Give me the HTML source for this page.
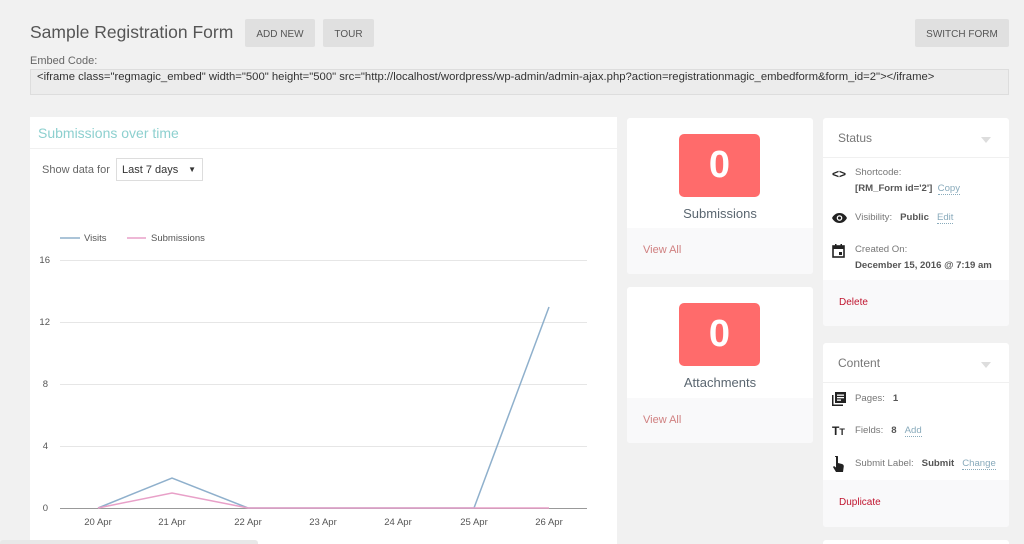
<!DOCTYPE html>
<html><head><style>
html,body{margin:0;width:1024px;height:544px;overflow:hidden}
body{background:#f1f1f1;font-family:"Liberation Sans",sans-serif;position:relative;color:#555}
.a{position:absolute}
.btn{position:absolute;background:#e0e0e0;border-radius:2px;font-size:10px;color:#555;text-align:center;line-height:28px;height:28px;top:19px}
.btn span{position:relative;top:2px}
.card{position:absolute;background:#fff;border-radius:3px;overflow:hidden}
.foot{position:absolute;left:0;right:0;bottom:0;background:#f9f9fa}
.red{position:absolute;left:52px;width:81px;height:63px;background:#ff6b6b;border-radius:5px;color:#fff;font-weight:bold;font-size:38px;text-align:center;line-height:63px}
.lbl{position:absolute;left:0;right:0;text-align:center;font-size:13px;color:#5a6670}
.va{position:absolute;left:16px;font-size:11px;color:#d08080}
.hd{position:absolute;left:0;right:0;top:0;border-bottom:1px solid #f0f0f0;font-size:12px;color:#777}
.hd span{position:absolute;left:15px}
.tri{position:absolute;right:18px;width:0;height:0;border-left:5px solid transparent;border-right:5px solid transparent;border-top:6px solid #ddd}
.row{position:absolute;left:32px;font-size:9.6px;color:#777;line-height:16px}
.row b{color:#555}
.lk{color:#8ab;border-bottom:1px dotted #8ab}
.ic{position:absolute;left:9px}
</style></head><body>
<div class="a" style="left:30px;top:22px;font-size:17.5px;color:#555">Sample Registration Form</div>
<div class="btn" style="left:245px;width:70px"><span>ADD NEW</span></div>
<div class="btn" style="left:323px;width:51px"><span>TOUR</span></div>
<div class="btn" style="left:915px;width:94px"><span>SWITCH FORM</span></div>
<div class="a" style="left:30px;top:55px;font-size:11px;color:#666">Embed Code:</div>
<div class="a" style="left:30px;top:69px;height:24px;background:#ececec;border:1px solid #ddd;font-size:11.3px;color:#333;line-height:15px;padding-left:6px;width:971px">&lt;iframe class="regmagic_embed" width="500" height="500" src="http://localhost/wordpress/wp-admin/admin-ajax.php?action=registrationmagic_embedform&amp;form_id=2"&gt;&lt;/iframe&gt;</div>

<div class="card" style="left:30px;top:117px;width:587px;height:440px;border-radius:0">
<div class="a" style="left:8px;top:8px;font-size:14px;color:#8dd0cf">Submissions over time</div>
<div class="a" style="left:0;right:0;top:31px;border-top:1px solid #f0f0f0"></div>
<div class="a" style="left:12px;top:47px;font-size:11px;color:#666">Show data for</div>
<div class="a" style="left:86px;top:41px;height:23px;border:1px solid #ddd;font-size:11px;color:#333;line-height:22px;padding-left:5px;box-sizing:border-box;width:87px">Last 7 days<span style="position:absolute;right:6px;font-size:8px">▼</span></div>
</div>
<svg class="a" style="left:0;top:0" width="620" height="544">
<g stroke="#e6e6e6" stroke-width="1"><line x1="60" y1="260.5" x2="587" y2="260.5"/><line x1="60" y1="322.5" x2="587" y2="322.5"/><line x1="60" y1="384.5" x2="587" y2="384.5"/><line x1="60" y1="446.5" x2="587" y2="446.5"/></g>
<line x1="60" y1="508.5" x2="587" y2="508.5" stroke="#999"/>
<g font-size="9.5" fill="#555" font-family="Liberation Sans"><text x="50" y="263" text-anchor="end">16</text><text x="50" y="325" text-anchor="end">12</text><text x="48" y="387" text-anchor="end">8</text><text x="48" y="449" text-anchor="end">4</text><text x="48" y="511" text-anchor="end">0</text>
<g text-anchor="middle"><text x="98" y="525">20 Apr</text><text x="172" y="525">21 Apr</text><text x="248" y="525">22 Apr</text><text x="323" y="525">23 Apr</text><text x="398" y="525">24 Apr</text><text x="474" y="525">25 Apr</text><text x="549" y="525">26 Apr</text></g>
<text x="84" y="241">Visits</text><text x="151" y="241">Submissions</text></g>
<line x1="60" y1="238" x2="80" y2="238" stroke="#8fb0cc" stroke-width="1.5"/>
<line x1="127" y1="238" x2="146" y2="238" stroke="#e8a0c8" stroke-width="1.5"/>
<polyline points="98,508 172,478 248,508 474,508 549,307" fill="none" stroke="#8fb0cc" stroke-width="1.5"/>
<polyline points="98,508 172,493 248,508 549,508" fill="none" stroke="#e8a0c8" stroke-width="1.5"/>
</svg>

<div class="card" style="left:627px;top:118px;width:186px;height:156px">
<div class="red" style="top:16px">0</div><div class="lbl" style="top:88px">Submissions</div>
<div class="foot" style="height:46px"><div class="va" style="top:16px">View All</div></div></div>
<div class="card" style="left:627px;top:287px;width:186px;height:156px">
<div class="red" style="top:16px">0</div><div class="lbl" style="top:88px">Attachments</div>
<div class="foot" style="height:45px"><div class="va" style="top:16px">View All</div></div></div>

<div class="card" style="left:823px;top:118px;width:186px;height:208px">
<div class="hd" style="height:39px"><span style="top:13px">Status</span><div class="tri" style="top:19px"></div></div>
<div class="ic" style="top:49px;font-size:12px;font-weight:bold;color:#222">&lt;&gt;</div>
<div class="row" style="top:47px">Shortcode:<br><b>[RM_Form id='2']</b> &nbsp;<span class="lk">Copy</span></div>
<svg class="ic" style="top:94px" width="15" height="12" viewBox="0 0 24 18"><path d="M12 1C6 1 2 5 0 9c2 4 6 8 12 8s10-4 12-8c-2-4-6-8-12-8z" fill="#222"/><circle cx="12" cy="9" r="4.5" fill="#fff"/><circle cx="12" cy="9" r="2.5" fill="#222"/></svg>
<div class="row" style="top:92px">Visibility: &nbsp;&nbsp;<b>Public</b> &nbsp;&nbsp;<span class="lk">Edit</span></div>
<svg class="ic" style="top:126px" width="13" height="14" viewBox="0 0 13 14"><rect x="1" y="2" width="11" height="11" fill="none" stroke="#222" stroke-width="1.6"/><rect x="1" y="2" width="11" height="3" fill="#222"/><rect x="3" y="0" width="1.5" height="3" fill="#222"/><rect x="8.5" y="0" width="1.5" height="3" fill="#222"/><rect x="7" y="8" width="3" height="3" fill="#222"/></svg>
<div class="row" style="top:124px">Created On:<br><b>December 15, 2016 @ 7:19 am</b></div>
<div class="foot" style="height:46px"><div class="a" style="left:16px;top:17px;font-size:10px;color:#c0152f">Delete</div></div></div>

<div class="card" style="left:823px;top:343px;width:186px;height:184px">
<div class="hd" style="height:39px"><span style="top:13px">Content</span><div class="tri" style="top:19px"></div></div>
<svg class="ic" style="top:49px" width="14" height="14" viewBox="0 0 14 14"><rect x="3" y="0" width="11" height="11" fill="#222"/><path d="M0 3v11h11v-1.5H1.5V3z" fill="#222"/><rect x="5" y="2.5" width="7" height="1.3" fill="#fff"/><rect x="5" y="5" width="7" height="1.3" fill="#fff"/><rect x="5" y="7.5" width="4" height="1.3" fill="#fff"/></svg>
<div class="row" style="top:48px">Pages: &nbsp;&nbsp;<b>1</b></div>
<div class="ic" style="top:81px;font-size:12px;font-weight:bold;color:#222">T<span style="font-size:9px">T</span></div>
<div class="row" style="top:80px">Fields: &nbsp;&nbsp;<b>8</b> &nbsp;&nbsp;<span class="lk">Add</span></div>
<svg class="ic" style="top:113px" width="12" height="16" viewBox="0 0 12 16"><path d="M3 1a1.5 1.5 0 013 0v6l4 1c1.5.4 2 1.5 1.7 3L11 16H4L1 11l1-1 2 1.5V1z" fill="#222"/></svg>
<div class="row" style="top:113px">Submit Label: &nbsp;&nbsp;<b>Submit</b> &nbsp;&nbsp;<span class="lk">Change</span></div>
<div class="foot" style="height:47px"><div class="a" style="left:16px;top:17px;font-size:10px;color:#c0152f">Duplicate</div></div></div>
<div class="card" style="left:823px;top:540px;width:186px;height:20px"></div>
<div class="card" style="left:0;top:540px;width:258px;height:10px;background:#e8e8e8"></div>
</body></html>
